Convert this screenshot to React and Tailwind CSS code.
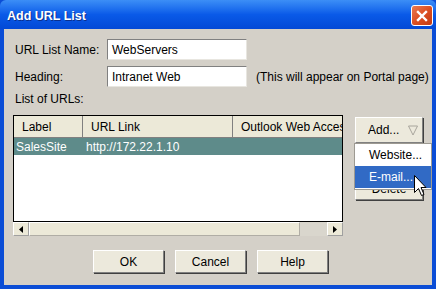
import React from "react";

const font = { fontFamily: '"Liberation Sans", Arial, sans-serif' };

const btnBase =
  "flex items-center bg-[#ece9dc] border border-t-white border-l-white border-r-[#808080] border-b-[#808080] shadow-[1px_1px_0_#404040] text-[12px] text-black";

function Btn({ children, className = "" }) {
  return <div className={`${btnBase} justify-center ${className}`}>{children}</div>;
}

function Input({ value }) {
  return (
    <div className="w-[140px] h-[21px] bg-white border border-t-[#808080] border-l-[#808080] border-r-[#e8e6e0] border-b-[#e8e6e0] flex items-center pl-[4px] text-[12px] text-black">
      {value}
    </div>
  );
}

export default function App() {
  return (
    <div style={font} className="w-[436px] h-[289px] flex flex-col bg-[#0b4dd6] overflow-hidden">
      {/* Title bar */}
      <div className="h-[29px] flex items-start justify-between pl-[7px] pr-[3px] bg-gradient-to-b from-[#3c8ef6] via-[#0a5ae8] to-[#0349d6] rounded-t-[6px]">
        <span className="mt-[9px] leading-[14px] text-[12.5px] font-bold text-white [text-shadow:1px_1px_0_#0b2f8c]">
          Add URL List
        </span>
        <div className="mt-[5px] w-[22px] h-[21px] rounded-[3px] border border-white bg-gradient-to-br from-[#ea7a50] via-[#dc4f22] to-[#c23a14] flex items-center justify-center">
          <svg width="12" height="12" viewBox="0 0 12 12">
            <path d="M2 2 L10 10 M10 2 L2 10" stroke="white" strokeWidth="2.4" strokeLinecap="square" />
          </svg>
        </div>
      </div>

      {/* Body */}
      <div className="flex-1 mx-[4px] mb-[4px] bg-[#d4d0c8] relative flex flex-col">
        <div className="mt-[10px] ml-[11px] flex items-center h-[21px]">
          <span className="w-[92px] text-[12px] text-black">URL List Name:</span>
          <Input value="WebServers" />
        </div>
        <div className="mt-[6px] ml-[11px] flex items-center h-[21px]">
          <span className="w-[92px] text-[12px] text-black">Heading:</span>
          <Input value="Intranet Web" />
          <span className="ml-[9px] text-[12px] text-black whitespace-nowrap">(This will appear on Portal page)</span>
        </div>
        <div className="mt-[5px] ml-[11px] text-[12px] leading-[14px] text-black">List of URLs:</div>

        <div className="mt-[9px] ml-[9px] flex items-start">
          {/* Table */}
          <div className="w-[330px] flex flex-col">
            <div className="h-[107px] border border-black bg-white flex flex-col overflow-hidden">
              <div className="h-[22px] flex bg-[#ece9d8] border-b border-[#808080] text-[12px] text-black shrink-0">
                <div className="w-[69px] border-r border-[#808080] flex items-center pl-[8px]">Label</div>
                <div className="w-[150px] border-r border-[#808080] flex items-center pl-[8px]">URL Link</div>
                <div className="flex-1 flex items-center pl-[8px] whitespace-nowrap overflow-hidden">Outlook Web Acces</div>
              </div>
              <div className="h-[17px] flex bg-[#5e8b8a] text-[12px] text-white shrink-0">
                <div className="w-[69px] flex items-center pl-[2px]">SalesSite</div>
                <div className="flex items-center pl-[3px]">http://172.22.1.10</div>
              </div>
            </div>
            {/* Scrollbar */}
            <div className="h-[14px] flex bg-[#d9d6cd]">
              <div className="w-[16px] h-full bg-[#ece9d8] border border-t-white border-l-white border-r-[#a0a0a0] border-b-[#a0a0a0] flex items-center justify-center">
                <svg width="4" height="7" viewBox="0 0 4 7"><path d="M4 0 L0 3.5 L4 7 Z" fill="black" /></svg>
              </div>
              <div className="w-[271px] h-full bg-[#ece9d8] border border-t-white border-l-white border-r-[#b0ada5] border-b-[#b0ada5]" />
              <div className="flex-1" />
              <div className="w-[16px] h-full bg-[#ece9d8] border border-t-white border-l-white border-r-[#a0a0a0] border-b-[#a0a0a0] flex items-center justify-center">
                <svg width="4" height="7" viewBox="0 0 4 7"><path d="M0 0 L4 3.5 L0 7 Z" fill="black" /></svg>
              </div>
            </div>
          </div>

          {/* Right buttons */}
          <div className="ml-[12px] w-[68px] flex flex-col">
            <div className={`${btnBase} justify-between mt-[2px] h-[26px] pl-[12px] pr-[4px]`}>
              <span>Add...</span>
              <svg width="10" height="11" viewBox="0 0 10 11">
                <path d="M0.5 1 L9.5 1 L5 10 Z" fill="none" stroke="#a8a59c" strokeWidth="1" />
              </svg>
            </div>
            <Btn className="mt-[32px] h-[25px] pt-[3px]">Delete</Btn>
          </div>
        </div>

        {/* Bottom buttons */}
        <div className="mt-[14px] ml-[89px] flex gap-[11px]">
          <Btn className="w-[71px] h-[23px]">OK</Btn>
          <Btn className="w-[71px] h-[23px]">Cancel</Btn>
          <Btn className="w-[71px] h-[23px]">Help</Btn>
        </div>

        {/* Dropdown menu */}
        <div className="absolute left-[350px] top-[114px] w-[78px] h-[47px] bg-white border border-[#9d9a92] flex flex-col text-[12px]">
          <div className="h-[22px] flex items-center pl-[14px] text-black">Website...</div>
          <div className="h-[22px] flex items-center pl-[14px] bg-[#316ac5] text-white">E-mail...</div>
        </div>

        {/* Cursor */}
        <svg className="absolute left-[410px] top-[146px]" width="13" height="22" viewBox="0 0 13 22">
          <path d="M0.5 0.5 L0.5 17.5 L4.5 13.5 L7.5 20.5 L10 19.5 L7 12.5 L12 12.5 Z" fill="white" stroke="black" strokeWidth="1" strokeLinejoin="miter" />
        </svg>
      </div>
    </div>
  );
}
